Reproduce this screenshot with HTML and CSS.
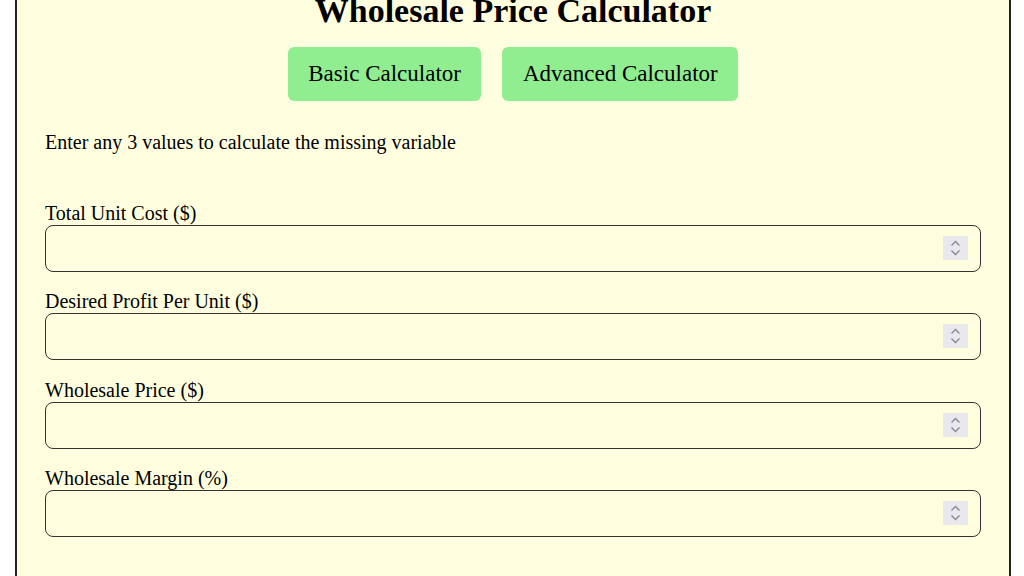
FILE: index.html
```
<!DOCTYPE html>
<html lang="en">
<head>
<meta charset="utf-8">
<title>Wholesale Price Calculator</title>
<link rel="stylesheet" href="styles.css">
</head>
<body>
<div class="container">
  <h1 class="title">Wholesale Price Calculator</h1>
  <div class="tabs">
    <button class="tab">Basic Calculator</button>
    <button class="tab">Advanced Calculator</button>
  </div>
  <p class="intro">Enter any 3 values to calculate the missing variable</p>
  <div class="group">
    <label class="label" for="cost">Total Unit Cost ($)</label>
    <div class="field">
      <input class="input" id="cost" type="text">
      <span class="spin"><svg width="25" height="24" viewBox="0 0 25 24"><path d="M8.5 9.5 L12.5 5.5 L16.5 9.5" fill="none" stroke="#8a8a8e" stroke-width="1.4"/><path d="M8.5 14.5 L12.5 18.5 L16.5 14.5" fill="none" stroke="#8a8a8e" stroke-width="1.4"/></svg></span>
    </div>
  </div>
  <div class="group">
    <label class="label" for="profit">Desired Profit Per Unit ($)</label>
    <div class="field">
      <input class="input" id="profit" type="text">
      <span class="spin"><svg width="25" height="24" viewBox="0 0 25 24"><path d="M8.5 9.5 L12.5 5.5 L16.5 9.5" fill="none" stroke="#8a8a8e" stroke-width="1.4"/><path d="M8.5 14.5 L12.5 18.5 L16.5 14.5" fill="none" stroke="#8a8a8e" stroke-width="1.4"/></svg></span>
    </div>
  </div>
  <div class="group">
    <label class="label" for="price">Wholesale Price ($)</label>
    <div class="field">
      <input class="input" id="price" type="text">
      <span class="spin"><svg width="25" height="24" viewBox="0 0 25 24"><path d="M8.5 9.5 L12.5 5.5 L16.5 9.5" fill="none" stroke="#8a8a8e" stroke-width="1.4"/><path d="M8.5 14.5 L12.5 18.5 L16.5 14.5" fill="none" stroke="#8a8a8e" stroke-width="1.4"/></svg></span>
    </div>
  </div>
  <div class="group">
    <label class="label" for="margin">Wholesale Margin (%)</label>
    <div class="field">
      <input class="input" id="margin" type="text">
      <span class="spin"><svg width="25" height="24" viewBox="0 0 25 24"><path d="M8.5 9.5 L12.5 5.5 L16.5 9.5" fill="none" stroke="#8a8a8e" stroke-width="1.4"/><path d="M8.5 14.5 L12.5 18.5 L16.5 14.5" fill="none" stroke="#8a8a8e" stroke-width="1.4"/></svg></span>
    </div>
  </div>
</div>
</body>
</html>
```
FILE: styles.css
```
html, body {
  margin: 0;
  padding: 0;
  background: #ffffff;
  overflow: hidden;
}
body {
  font-family: "Liberation Serif", "Times New Roman", serif;
  color: #000;
}
.container {
  margin: -9px 13px 0 15px;
  min-height: 700px;
  background: #ffffe0;
  border: 2px solid #222;
  border-top: none;
  padding: 0 28px;
}
.title {
  margin: 1px 0 0 0;
  font-size: 34px;
  font-weight: bold;
  text-align: center;
  line-height: 38px;
}
.tabs {
  display: flex;
  justify-content: center;
  gap: 21px;
  margin-top: 17px;
}
.tab {
  font-family: "Liberation Serif", "Times New Roman", serif;
  font-size: 23px;
  line-height: 26px;
  padding: 14px 20.5px;
  background: #90ee90;
  border: none;
  border-radius: 6px;
  color: #000;
}
.intro {
  margin: 30px 0 0 0;
  font-size: 20px;
  line-height: 23px;
}
.group {
  margin-bottom: 18.3px;
}
.intro + .group {
  margin-top: 48px;
}
.label {
  display: block;
  font-size: 20px;
  line-height: 23px;
}
.field {
  position: relative;
}
.input {
  display: block;
  box-sizing: border-box;
  width: 100%;
  height: 47px;
  padding: 12px;
  font-family: "Liberation Serif", "Times New Roman", serif;
  font-size: 18px;
  border: 1px solid #333;
  border-radius: 8px;
  background: transparent;
}
.spin {
  position: absolute;
  right: 13px;
  top: 11px;
  width: 25px;
  height: 24px;
  background: #e9e9ed;
  display: block;
}
.spin svg {
  display: block;
}
```
